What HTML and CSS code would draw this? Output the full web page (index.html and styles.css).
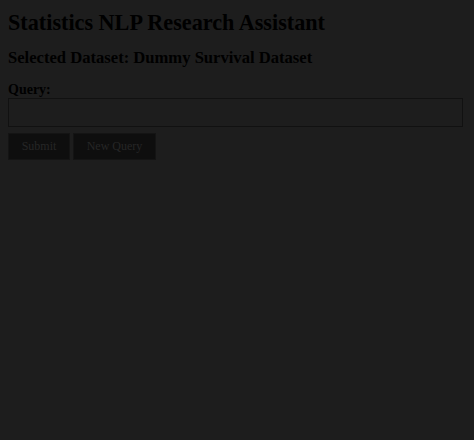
FILE: index.html
```html
<!DOCTYPE html>
<html>
<head>
<meta charset="utf-8">
<link rel="stylesheet" href="styles.css">
</head>
<body>
<div class="app">
  <h1 class="title">Statistics NLP Research Assistant</h1>
  <h2 class="subtitle">Selected Dataset: Dummy Survival Dataset</h2>
  <form class="query-form">
    <label class="label" for="q">Query:</label>
    <input class="input" id="q" type="text">
    <div class="actions">
      <button class="btn btn-submit" type="button">Submit</button>
      <button class="btn btn-new" type="button">New Query</button>
    </div>
  </form>
</div>
</body>
</html>
```
FILE: styles.css
```css
html, body {
  margin: 0;
  padding: 0;
  background: #1d1d1d;
  height: 100%;
}
body {
  font-family: "Liberation Serif", "Times New Roman", serif;
  color: #000;
}
.app {
  padding: 8px;
}
.title {
  font-size: 22.2px;
  font-weight: bold;
  margin: 2px 0 0 0;
  line-height: 26px;
}
.subtitle {
  font-size: 16.6px;
  font-weight: bold;
  margin: 12px 0 0 0;
  line-height: 20px;
}
.query-form {
  display: flex;
  flex-direction: column;
  margin-top: 13px;
}
.label {
  font-size: 14px;
  font-weight: bold;
  line-height: 17px;
}
.input {
  box-sizing: border-box;
  height: 29px;
  width: 455px;
  margin-top: 0;
  background: #1d1d1d;
  border: 1px solid #111;
  outline: none;
}
.actions {
  display: flex;
  gap: 3px;
  margin-top: 6px;
}
.btn {
  background: #0e0e0e;
  color: #262626;
  border: 1px solid #141414;
  font-family: "Liberation Serif", "Times New Roman", serif;
  font-size: 12px;
  height: 27px;
  padding: 0;
}
.btn-submit {
  width: 62px;
}
.btn-new {
  width: 83px;
}
```
